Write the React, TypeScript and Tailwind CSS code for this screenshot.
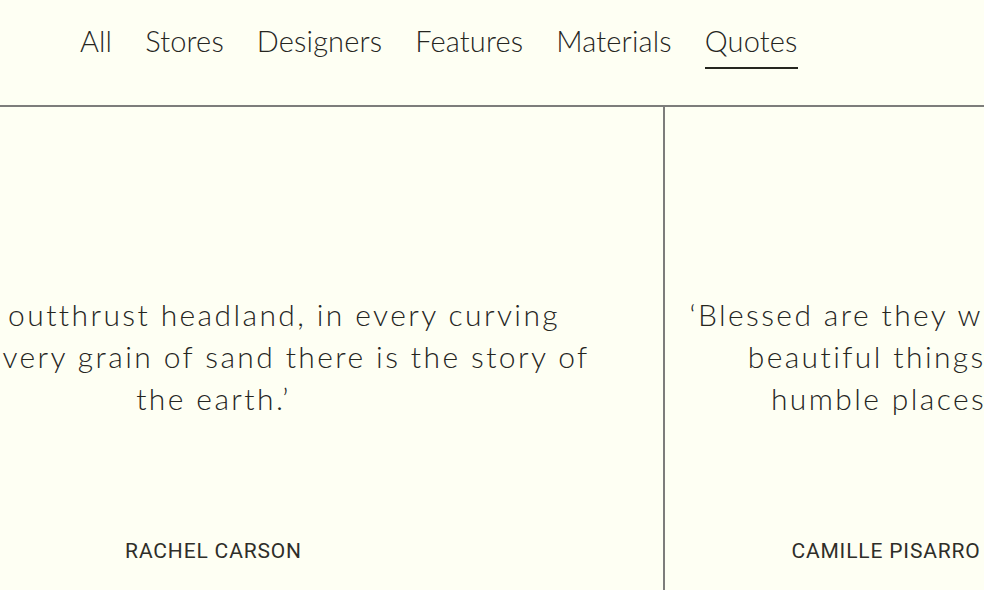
const tabs = ['All', 'Stores', 'Designers', 'Features', 'Materials', 'Quotes']

const quotes = [
  {
    lines: ['‘In every outthrust headland, in every curving', 'beach, in every grain of sand there is the story of', 'the earth.’'],
    author: 'Rachel Carson',
    width: 'ml-[-236px] w-[901px] border-r-2',
  },
  {
    lines: ['‘Blessed are they who see', 'beautiful things in', 'humble places.’'],
    author: 'Camille Pisarro',
    width: 'w-[442px]',
  },
]

export default function App() {
  return (
    <div className="h-[590px] w-[984px] overflow-hidden bg-[#fefff3] text-[#26261f] flex flex-col">
      {/* tabs */}
      <nav className="h-[107px] shrink-0 border-b-2 border-[#7d7d7b] pl-[80px] pt-[23px] flex items-start gap-[33px] font-['Lato',sans-serif] font-light text-[29px] leading-[35px] tracking-[0.005em]">
        {tabs.map((t) => (
          <span
            key={t}
            className={t === 'Quotes' ? 'pb-[9px] border-b-2 border-[#26261f]' : ''}
          >
            {t}
          </span>
        ))}
      </nav>

      {/* quotes */}
      <div className="flex flex-1 overflow-hidden">
        {quotes.map((q) => (
          <div
            key={q.author}
            className={`${q.width} shrink-0 border-[#7d7d7b] flex flex-col items-center pt-[186px]`}
          >
            <p className="font-['Lato',sans-serif] font-light text-[30px] leading-[42px] tracking-[0.08em] text-center whitespace-nowrap">
              {q.lines.map((l) => (
                <span key={l} className="block">
                  {l}
                </span>
              ))}
            </p>
            <div className="mt-auto mb-[27px] font-['Roboto',sans-serif] text-[21px] leading-[24px] uppercase tracking-[0.04em] text-[#2e2e29]">
              {q.author}
            </div>
          </div>
        ))}
      </div>
    </div>
  )
}
